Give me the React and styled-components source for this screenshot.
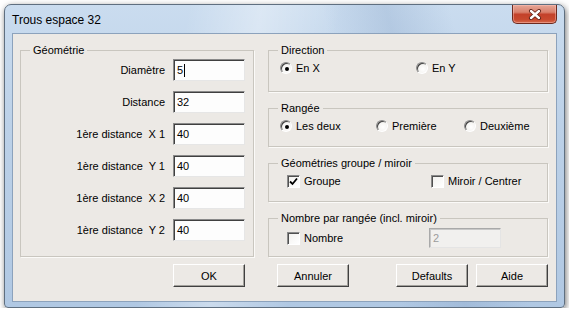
import React from 'react';
import styled, { createGlobalStyle } from 'styled-components';

const GlobalStyle = createGlobalStyle`
  html, body {
    margin: 0;
    background: #ffffff;
  }
  body {
    font-family: "Liberation Sans", Arial, sans-serif;
    font-size: 11px;
    color: #000;
  }
`;

const Window = styled.div`
  box-sizing: border-box;
  width: 561px;
  height: 304px;
  margin: 4px 0 0 4px;
  padding: 0 7px 5px 7px;
  border: 1px solid #5f6f80;
  border-radius: 7px 7px 4px 4px;
  display: flex;
  flex-direction: column;
  background:
    linear-gradient(100deg, rgba(255,255,255,0) 30%, rgba(255,255,255,0.35) 42%, rgba(255,255,255,0) 55%),
    linear-gradient(75deg, rgba(255,255,255,0) 62%, rgba(120,150,190,0.25) 72%, rgba(255,255,255,0) 82%),
    linear-gradient(180deg, #cadcef 0%, #bcd1e8 40%, #b0c8e3 100%);
  box-shadow: 1px 2px 6px rgba(0, 0, 0, 0.55);
`;

const TitleBar = styled.div`
  height: 28px;
  flex: none;
  display: flex;
  justify-content: space-between;
  align-items: flex-start;
`;

const Title = styled.div`
  margin-top: 8px;
  font-size: 12px;
  line-height: 15px;
  color: #000;
`;

const CloseButton = styled.div`
  box-sizing: border-box;
  width: 45px;
  height: 19px;
  border: 1px solid #6d2a1f;
  border-top: none;
  border-radius: 0 0 5px 5px;
  display: flex;
  align-items: center;
  justify-content: center;
  background: linear-gradient(180deg, #e6a696 0%, #d9806c 40%, #c3412a 52%, #c8492e 80%, #d56a4d 100%);
  box-shadow: inset 0 0 0 1px rgba(255, 200, 190, 0.45);
`;

const Client = styled.div`
  box-sizing: border-box;
  height: 269px;
  border: 1px solid #8ca2bc;
  background: #ece9e5;
  padding: 10px 8px 0 7px;
  display: grid;
  grid-template-columns: 234px 280px;
  grid-template-rows: 213px 23px;
  column-gap: 14px;
  row-gap: 7px;
`;

const Group = styled.fieldset`
  box-sizing: border-box;
  margin: 0;
  padding: 0;
  min-width: 0;
  height: ${p => p.$h}px;
  border: 1px solid #c9c6bf;
  box-shadow: 1px 1px 0 #fbfaf8;
`;

const Legend = styled.legend`
  margin-left: 9px;
  padding: 0 3px;
  font-size: 11px;
  line-height: 13px;
`;

const RightColumn = styled.div`
  display: flex;
  flex-direction: column;
  gap: 10px;
`;

const Fields = styled.div`
  display: flex;
  flex-direction: column;
  gap: 10px;
  padding: 2px 8px 0 0;
`;

const FieldRow = styled.div`
  height: 22px;
  display: flex;
  align-items: center;
  justify-content: flex-end;
  gap: 8px;
`;

const FieldLabel = styled.span`
  white-space: pre;
`;

const TextBox = styled.div`
  box-sizing: border-box;
  width: 72px;
  height: ${p => (p.$small ? 20 : 22)}px;
  padding-left: 3px;
  display: flex;
  align-items: center;
  border: 1px solid;
  border-color: ${p => (p.$disabled ? '#a9a9a9 #e4e4e4 #e4e4e4 #a9a9a9' : '#8a8a8a #e6e6e6 #e6e6e6 #8a8a8a')};
  box-shadow: ${p => (p.$disabled ? 'inset 1px 1px 0 #c8c8c8' : 'inset 1px 1px 0 #404040')};
  background: ${p => (p.$disabled ? '#f1f0ee' : '#fdfdfd')};
  color: ${p => (p.$disabled ? '#9c9c9c' : '#000')};
`;

const Caret = styled.span`
  display: inline-block;
  width: 1px;
  height: 13px;
  background: #000;
  margin-left: 1px;
`;

const OptionRow = styled.div`
  height: 22px;
  padding: ${p => p.$top || 0}px 0 0 ${p => p.$indent}px;
  display: grid;
  grid-template-columns: ${p => p.$cols};
  align-items: center;
`;

const Option = styled.label`
  display: flex;
  align-items: center;
  gap: ${p => p.$gap}px;
  white-space: nowrap;
`;

const Radio = styled.span`
  box-sizing: border-box;
  width: 12px;
  height: 12px;
  border-radius: 50%;
  border: 1px solid;
  border-color: #8a8a8a #ffffff #ffffff #8a8a8a;
  box-shadow: inset 1px 1px 0 #404040;
  background: radial-gradient(circle at 60% 60%, #ffffff 0%, #f2f1ee 70%, #e0ded9 100%);
  display: flex;
  align-items: center;
  justify-content: center;
  &::after {
    content: '';
    width: 4px;
    height: 4px;
    margin: 1px 0 0 1px;
    border-radius: 50%;
    background: ${p => (p.$on ? '#000' : 'transparent')};
  }
`;

const CheckBox = styled.span`
  box-sizing: border-box;
  width: 13px;
  height: 13px;
  border: 1px solid;
  border-color: #8a8a8a #ffffff #ffffff #8a8a8a;
  box-shadow: inset 1px 1px 0 #505050;
  background: linear-gradient(135deg, #f2f1ee 0%, #ffffff 100%);
  display: flex;
  align-items: center;
  justify-content: center;
`;

const ButtonCell = styled.div`
  display: flex;
  align-items: flex-start;
  justify-content: ${p => (p.$end ? 'flex-end' : 'flex-start')};
  padding: ${p => (p.$end ? '0 9px 0 0' : '0 0 0 9px')};
  gap: 8px;
`;

const Button = styled.div`
  box-sizing: border-box;
  width: 72px;
  height: 23px;
  margin-left: ${p => (p.$push ? 'auto' : '0')};
  display: flex;
  align-items: center;
  justify-content: center;
  border: 1px solid;
  border-color: #ffffff #404040 #404040 #ffffff;
  box-shadow: inset -1px -1px 0 #a3a19c;
  background: #ece9e5;
`;

const CloseIcon = () => (
  <svg width="14" height="11" viewBox="0 0 14 11">
    <path d="M3 2 L11 9 M11 2 L3 9" stroke="#5a1c12" strokeWidth="4" strokeLinecap="round" />
    <path d="M3 2 L11 9 M11 2 L3 9" stroke="#ffffff" strokeWidth="2.4" strokeLinecap="round" />
  </svg>
);

const CheckMark = () => (
  <svg width="9" height="9" viewBox="0 0 9 9">
    <path d="M1 4.5 L3.5 7 L8 1.5" stroke="#000" strokeWidth="1.8" fill="none" />
  </svg>
);

const fields = [
  ['Diamètre', '5', true],
  ['Distance', '32'],
  ['1ère distance  X 1', '40'],
  ['1ère distance  Y 1', '40'],
  ['1ère distance  X 2', '40'],
  ['1ère distance  Y 2', '40'],
];

export default function App() {
  return (
    <>
      <GlobalStyle />
      <Window>
        <TitleBar>
          <Title>Trous espace 32</Title>
          <CloseButton><CloseIcon /></CloseButton>
        </TitleBar>
        <Client>
          <Group $h={213}>
            <Legend>Géométrie</Legend>
            <Fields>
              {fields.map(([label, value, caret]) => (
                <FieldRow key={label}>
                  <FieldLabel>{label}</FieldLabel>
                  <TextBox>{value}{caret && <Caret />}</TextBox>
                </FieldRow>
              ))}
            </Fields>
          </Group>

          <RightColumn>
            <Group $h={48}>
              <Legend>Direction</Legend>
              <OptionRow $indent={11} $cols="136px 1fr">
                <Option $gap={4}><Radio $on />En X</Option>
                <Option $gap={4}><Radio />En Y</Option>
              </OptionRow>
            </Group>
            <Group $h={45}>
              <Legend>Rangée</Legend>
              <OptionRow $indent={11} $cols="96px 88px 1fr">
                <Option $gap={4}><Radio $on />Les deux</Option>
                <Option $gap={4}><Radio />Première</Option>
                <Option $gap={4}><Radio />Deuxième</Option>
              </OptionRow>
            </Group>
            <Group $h={45}>
              <Legend>Géométries groupe / miroir</Legend>
              <OptionRow $indent={18} $cols="144px 1fr">
                <Option $gap={4}><CheckBox><CheckMark /></CheckBox>Groupe</Option>
                <Option $gap={4}><CheckBox />Miroir / Centrer</Option>
              </OptionRow>
            </Group>
            <Group $h={45}>
              <Legend>Nombre par rangée (incl. miroir)</Legend>
              <OptionRow $indent={18} $top={2} $cols="142px 1fr">
                <Option $gap={4}><CheckBox />Nombre</Option>
                <TextBox $disabled $small>2</TextBox>
              </OptionRow>
            </Group>
          </RightColumn>

          <ButtonCell $end>
            <Button>OK</Button>
          </ButtonCell>
          <ButtonCell>
            <Button>Annuler</Button>
            <Button $push>Defaults</Button>
            <Button>Aide</Button>
          </ButtonCell>
        </Client>
      </Window>
    </>
  );
}
